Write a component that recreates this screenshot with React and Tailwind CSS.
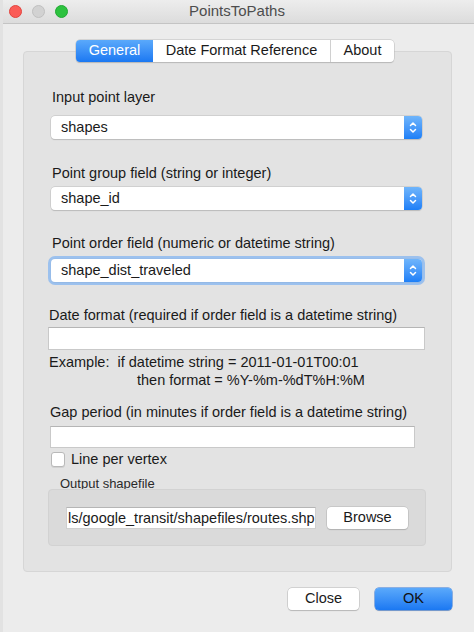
import React from 'react';

function Stepper() {
    return (
        <div className="w-[18px] h-full rounded-r-[4px] bg-gradient-to-b from-[#6fb5fb] to-[#1c7ff7] flex items-center justify-center">
            <svg width="8" height="13" viewBox="0 0 8 13" fill="none" stroke="white" strokeWidth="1.5" strokeLinecap="round" strokeLinejoin="round">
                <path d="M1.5 4.5 L4 2 L6.5 4.5" />
                <path d="M1.5 8.5 L4 11 L6.5 8.5" />
            </svg>
        </div>
    );
}

function Select({ value, focused, className }) {
    return (
        <div
            className={`h-[23px] flex items-stretch bg-white rounded-[4px] shadow-[0_0_0_0.5px_#bdbdbd,0_1px_1px_rgba(0,0,0,0.18)] ${focused ? 'ring-[3px] ring-[#8ab8f0]/80' : ''} ${className}`}
        >
            <div className="flex-1 pl-[10px] text-[14.5px] leading-[23px] text-[#1a1a1a]">{value}</div>
            <Stepper />
        </div>
    );
}

function Label({ children, className }) {
    return <div className={`h-[17px] text-[14.5px] leading-[17px] text-[#1a1a1a] whitespace-pre ${className}`}>{children}</div>;
}

function TextInput({ className, children }) {
    return (
        <div className={`bg-white border border-[#c9c9c9] border-t-[#b5b5b5] ${className}`}>
            {children}
        </div>
    );
}

export default function App() {
    return (
        <div className="w-[474px] h-[632px] bg-[#ececec] flex flex-col border-l-[3px] border-[#e2e2e2] font-['Liberation_Sans',Arial,sans-serif] text-[#1a1a1a] overflow-hidden">
            {/* title bar */}
            <div className="h-[24px] -ml-[3px] flex items-center relative bg-gradient-to-b from-[#ededed] to-[#dcdcdc] border-b border-[#c4c4c4]">
                <div className="flex gap-[10px] pl-[9px]">
                    <div className="w-[13px] h-[13px] rounded-full bg-[#fb5c57] border border-[#e2443f]" />
                    <div className="w-[13px] h-[13px] rounded-full bg-[#d2d2d2] border border-[#c0c0c0]" />
                    <div className="w-[13px] h-[13px] rounded-full bg-[#2dc23f] border border-[#22a934]" />
                </div>
                <div className="absolute inset-0 flex items-center justify-center text-[15px] text-[#4d4d4d]">PointsToPaths</div>
            </div>

            {/* tabs */}
            <div className="mt-[16px] ml-[73px] flex h-[22px] relative z-10 w-fit rounded-[4px] bg-white shadow-[0_0_0_0.5px_#bcbcbc,0_1px_1px_rgba(0,0,0,0.2)] text-[14.5px]">
                <div className="w-[77px] flex items-center justify-center rounded-l-[4px] bg-gradient-to-b from-[#5aa9fb] to-[#1a78f2] text-white">General</div>
                <div className="w-[178px] flex items-center justify-center border-r border-[#d0d0d0]">Date Format Reference</div>
                <div className="w-[63px] flex items-center justify-center">About</div>
            </div>

            {/* panel */}
            <div className="-mt-[11px] ml-[20px] w-[429px] h-[521px] bg-[#e3e3e3] border border-[#d6d6d6] rounded-[4px] flex flex-col">
                <Label className="mt-[37px] ml-[28px]">Input point layer</Label>
                <Select value="shapes" className="mt-[10px] ml-[27px] w-[371px]" />

                <Label className="mt-[26px] ml-[28px]">Point group field (string or integer)</Label>
                <Select value="shape_id" className="mt-[5px] ml-[27px] w-[371px] h-[22px]" />

                <Label className="mt-[25px] ml-[28px]">Point order field (numeric or datetime string)</Label>
                <Select value="shape_dist_traveled" focused className="mt-[7px] ml-[27px] w-[371px]" />

                <Label className="mt-[25px] ml-[25px]">Date format (required if order field is a datetime string)</Label>
                <TextInput className="mt-[3px] ml-[24px] w-[377px] h-[23px]" />
                <Label className="mt-[4px] ml-[25px]">Example:  if datetime string = 2011-01-01T00:01</Label>
                <Label className="mt-[1px] ml-[113px]">then format = %Y-%m-%dT%H:%M</Label>

                <Label className="mt-[15px] ml-[26px]">Gap period (in minutes if order field is a datetime string)</Label>
                <TextInput className="mt-[5px] ml-[26px] w-[365px] h-[22px]" />

                <div className="mt-[3px] ml-[27px] flex items-center h-[16px]">
                    <div className="w-[14px] h-[15px] rounded-[3px] bg-white border border-[#b9b9b9] shadow-[0_1px_0_rgba(0,0,0,0.08)]" />
                    <span className="ml-[6px] text-[14.5px] leading-[16px]">Line per vertex</span>
                </div>

                <div className="mt-[10px] ml-[36px] h-[13px] text-[13px] leading-[13px] text-[#2a2a2a]">Output shapefile</div>
                <div className="-mt-[1px] ml-[24px] w-[378px] h-[57px] bg-[#dadada] rounded-[4px] border border-[#d2d2d2] flex items-start pt-[17px] pl-[17px]">
                    <TextInput className="w-[250px] h-[22px] text-[14.5px] leading-[20px] pl-[1px] border-[#cfcfcf] overflow-hidden whitespace-nowrap">
                        ls/google_transit/shapefiles/routes.shp
                    </TextInput>
                    <div className="ml-[11px] w-[81px] h-[22px] bg-white rounded-[4px] shadow-[0_0_0_0.5px_#b5b5b5,0_1px_1px_rgba(0,0,0,0.2)] flex items-center justify-center text-[14.5px]">
                        Browse
                    </div>
                </div>
            </div>

            {/* bottom buttons */}
            <div className="mt-[16px] flex">
                <div className="ml-[285px] w-[71px] h-[22px] bg-white rounded-[4px] shadow-[0_0_0_0.5px_#b5b5b5,0_1px_1px_rgba(0,0,0,0.2)] flex items-center justify-center text-[14.5px]">
                    Close
                </div>
                <div className="ml-[16px] w-[77px] h-[22px] rounded-[4px] bg-gradient-to-b from-[#5aa9fb] to-[#1a78f2] shadow-[0_0_0_0.5px_#2a72d8,0_1px_1px_rgba(0,0,0,0.2)] flex items-center justify-center text-[14.5px] text-[#111]">
                    OK
                </div>
            </div>
        </div>
    );
}
